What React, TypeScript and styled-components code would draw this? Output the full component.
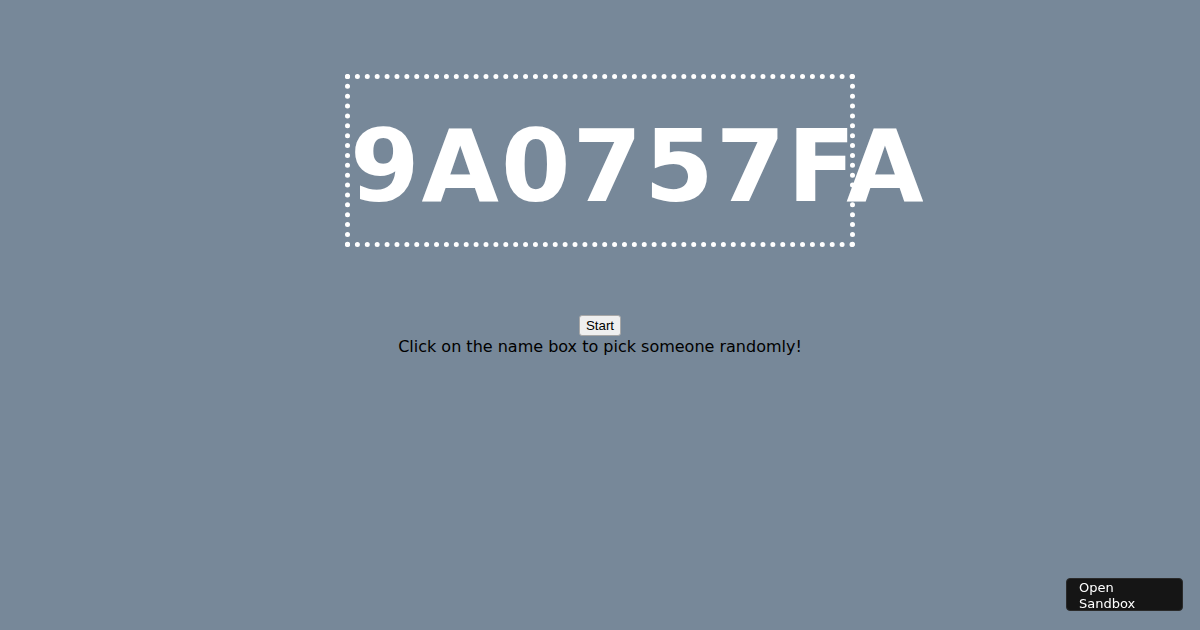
import React from 'react'
import styled, { createGlobalStyle } from 'styled-components'

const GlobalStyle = createGlobalStyle`
body {
  margin: 0;
  background: #778899;
  font-family: "DejaVu Sans", sans-serif;
}
`

export default function App() {
  return (
    <>
      <GlobalStyle />
      <Page>
        <NameBox>
          <Name>9A0757FA</Name>
        </NameBox>
        <StartButton>Start</StartButton>
        <Hint>Click on the name box to pick someone randomly!</Hint>
      </Page>
      <SandboxLink>Open Sandbox</SandboxLink>
    </>
  )
}

const Page = styled.div`
display: flex;
flex-direction: column;
align-items: center;
padding-top: 74px;
`
const NameBox = styled.div`
width: 500px;
height: 163px;
border: 5px dotted #fff;
cursor: pointer;
`
const Name = styled.div`
font-size: 100px;
font-weight: 700;
line-height: 116px;
letter-spacing: 2px;
color: #fff;
white-space: nowrap;
padding-top: 30px;
padding-left: 0;
`
const StartButton = styled.button`
margin-top: 68px;
font-family: "Liberation Sans", Arial, sans-serif;
font-size: 13.33px;
padding: 1px 6px;
height: 21px;
background: #efefef;
border: 1px solid #a7a7a7;
border-radius: 3px;
color: #000;
`
const Hint = styled.p`
margin: 1px 0 0;
font-size: 16px;
line-height: 19px;
color: #000;
`
const SandboxLink = styled.a`
position: fixed;
right: 17px;
bottom: 19px;
width: 117px;
box-sizing: border-box;
padding: 1px 12px 0;
height: 33px;
background: #151515;
border: 1px solid #2a2a2a;
border-radius: 4px;
color: #fff;
font-size: 13px;
line-height: 16px;
`
